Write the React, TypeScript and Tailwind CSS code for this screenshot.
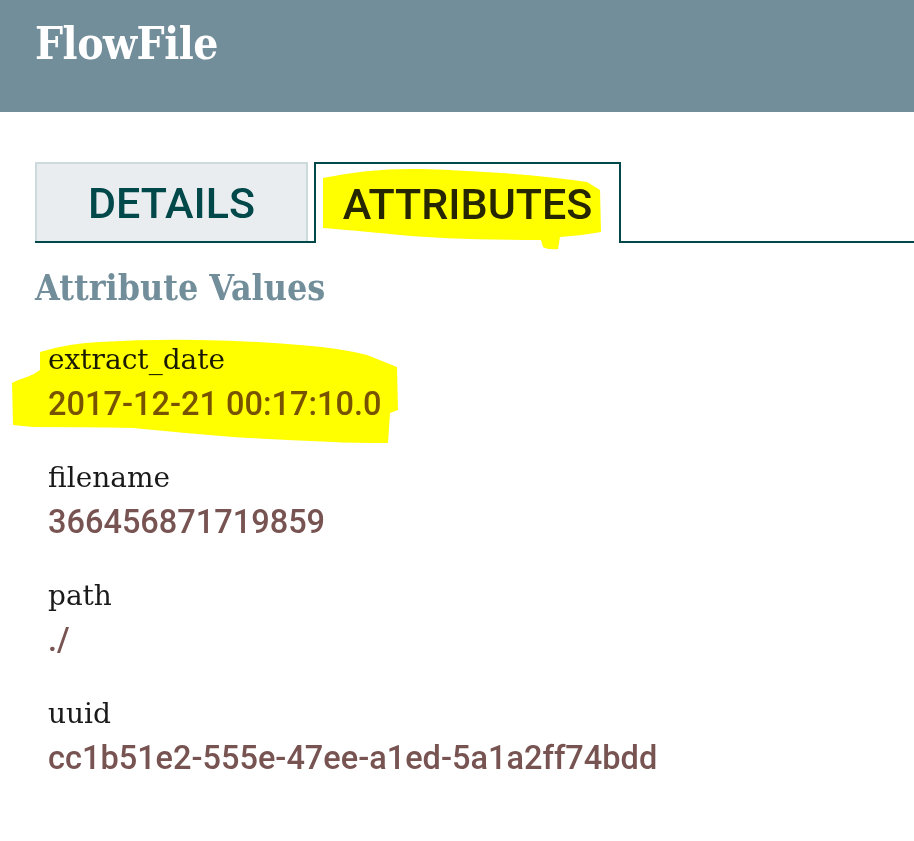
import React from "react";

const slab = { fontFamily: '"DejaVu Serif", "Liberation Serif", serif' };
const roboto = { fontFamily: 'Roboto, "Liberation Sans", sans-serif' };

const items = [
  { k: "extract_date", v: "2017-12-21 00:17:10.0" },
  { k: "filename", v: "366456871719859" },
  { k: "path", v: "./" },
  { k: "uuid", v: "cc1b51e2-555e-47ee-a1ed-5a1a2ff74bdd" },
];

export default function App() {
  return (
    <div className="relative w-[914px] h-[841px] bg-white overflow-hidden">
      <div className="h-[112px] bg-[#728e9b] pl-[35px] pt-[18px]">
        <div
          className="text-white font-bold text-[44px] leading-[52px] font-stretch-condensed tracking-[-0.5px]"
          style={slab}
        >
          FlowFile
        </div>
      </div>
      <div className="pl-[35px] pt-[50px]">
        <div className="flex items-end gap-[6px] border-b-2 border-[#004849] h-[81px]" style={roboto}>
          <div className="w-[273px] h-[79px] border-2 border-b-0 border-[#ccdadb] bg-[#e9edf0] flex items-center justify-center text-[#004849] text-[43px] font-medium pt-[2px]">
            DETAILS
          </div>
          <div className="w-[307px] h-[81px] -mb-[2px] border-2 border-b-0 border-[#004849] bg-white flex items-center justify-center text-[#262626] text-[43px] font-medium pt-[2px]">
            ATTRIBUTES
          </div>
        </div>
        <div
          className="mt-[21px] text-[#728e9b] font-bold text-[35.5px] leading-[48px] font-stretch-condensed"
          style={slab}
        >
          Attribute Values
        </div>
        <div className="mt-[26px] pl-[13px]">
          {items.map((it) => (
            <div key={it.k} className="mb-[30px]">
              <div className="text-[#1a1a1a] text-[28px] leading-[44px]" style={slab}>
                {it.k}
              </div>
              <div className="text-[#775351] text-[32.5px] leading-[44px] font-medium" style={roboto}>
                {it.v}
              </div>
            </div>
          ))}
        </div>
      </div>
      <svg
        className="absolute left-0 top-0 pointer-events-none mix-blend-multiply"
        width="914"
        height="841"
        viewBox="0 0 914 841"
      >
        <path
          fill="#ffff00"
          d="M323 178 Q370 168 420 169 Q520 172 587 182 L600 190 L601 232 Q580 236 560 237 L558 249 Q548 250 543 247 L541 240 Q450 240 400 235 Q350 230 323 228 Z"
        />
        <path
          fill="#ffff00"
          d="M40 352 Q70 343 100 342 Q150 339 200 340 Q255 341 300 345 Q340 348 367 355 L397 367 L398 410 L390 413 L388 443 Q350 443 333 442 Q283 440 233 437 Q183 433 133 428 Q80 427 33 427 L13 425 L12 383 Q20 379 27 377 Q35 374 40 370 Z"
        />
      </svg>
    </div>
  );
}
